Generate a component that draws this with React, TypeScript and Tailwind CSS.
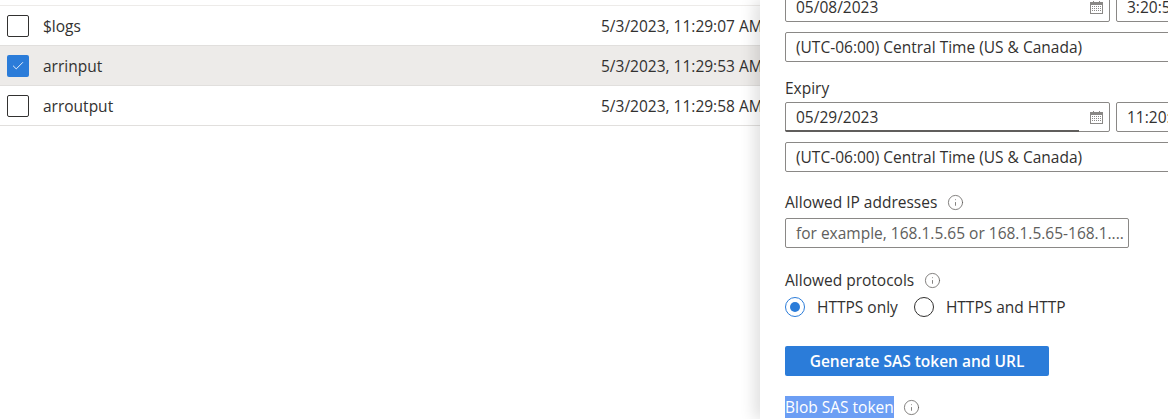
import { Check, Info } from 'lucide-react'

const containers = [
  { name: '$logs', modified: '5/3/2023, 11:29:07 AM', checked: false },
  { name: 'arrinput', modified: '5/3/2023, 11:29:53 AM', checked: true },
  { name: 'arroutput', modified: '5/3/2023, 11:29:58 AM', checked: false },
]

function CalendarIcon() {
  return (
    <svg width="15" height="15" viewBox="0 0 15 15" className="text-[#8a8886]">
      <rect x="1.5" y="2.5" width="12" height="11" fill="none" stroke="currentColor" />
      <rect x="1.5" y="2.5" width="12" height="2.5" fill="currentColor" />
      <line x1="4.5" y1="1" x2="4.5" y2="3.5" stroke="currentColor" />
      <line x1="10.5" y1="1" x2="10.5" y2="3.5" stroke="currentColor" />
      {[6.5, 8.5, 10.5].map((y) =>
        [3.5, 5.5, 7.5, 9.5, 11.5].map((x) => (
          <rect key={`${x}-${y}`} x={x - 0.5} y={y - 0.5} width="1" height="1" fill="currentColor" />
        )),
      )}
    </svg>
  )
}

function Label({ text, info, className = '' }: { text: string; info?: boolean; className?: string }) {
  return (
    <div className={`flex items-center gap-[10px] h-[20px] ${className}`}>
      <span>{text}</span>
      {info && <Info className="size-[17px] text-[#605e5c]" strokeWidth={1.1} />}
    </div>
  )
}

function DateRow({ date, time, className = '', underline }: { date: string; time: string; className?: string; underline?: boolean }) {
  return (
    <div className={`flex gap-[6px] whitespace-nowrap ${className}`}>
      <div className="relative w-[325px] h-[30px] shrink-0 flex items-center justify-between border border-[#8a8886] rounded-[2px] pl-[10px] pr-[5px]">
        <span>{date}</span>
        <CalendarIcon />
        {underline && <span className="absolute left-[-1px] bottom-[-1px] w-[294px] h-[2px] bg-[#605e5c] rounded-bl-[2px]" />}
      </div>
      <div className="flex-1 h-[30px] flex items-center border border-[#8a8886] rounded-[2px] px-[10px] overflow-hidden">
        <span>{time}</span>
      </div>
    </div>
  )
}

function Select({ value, className = '' }: { value: string; className?: string }) {
  return (
    <div className={`h-[30px] flex items-center border border-[#8a8886] rounded-[2px] px-[10px] whitespace-nowrap ${className}`}>
      {value}
    </div>
  )
}

function Radio({ label, selected }: { label: string; selected?: boolean }) {
  return (
    <div className="flex items-center gap-[12px]">
      <span
        className={`size-[20px] rounded-full border flex items-center justify-center bg-white ${
          selected ? 'border-[#2b7cd9]' : 'border-[#323130]'
        }`}
      >
        {selected && <span className="size-[10px] rounded-full bg-[#2b7cd9]" />}
      </span>
      <span>{label}</span>
    </div>
  )
}

export default function App() {
  return (
    <div className="w-[1168px] h-[419px] overflow-hidden flex bg-white text-[#323130] text-[15.5px] leading-[20px] font-['Open_Sans',sans-serif]">
      <section className="flex-1 min-w-0 overflow-hidden">
        <div className="w-[800px]">
          <div className="h-[6px] border-b border-[#edebe9]" />
          {containers.map((c) => (
            <div
              key={c.name}
              className={`h-[40px] flex items-center border-b border-[#e1dfdd] ${c.checked ? 'bg-[#edebe9]' : ''}`}
            >
              <div className="pl-[7px] w-[43px] shrink-0">
                {c.checked ? (
                  <span className="size-[22px] rounded-[2px] bg-[#2b7cd9] flex items-center justify-center">
                    <Check className="size-[14px] text-white" strokeWidth={1.5} />
                  </span>
                ) : (
                  <span className="block size-[22px] rounded-[2px] border border-[#323130] bg-white" />
                )}
              </div>
              <div className="w-[558px] shrink-0">{c.name}</div>
              <div className="whitespace-nowrap">{c.modified}</div>
            </div>
          ))}
        </div>
      </section>

      <aside className="relative z-10 w-[408px] shrink-0 overflow-hidden bg-white shadow-[-6px_0_14px_rgba(0,0,0,0.12)]">
        <div className="w-[460px] pl-[25px] -mt-[8px] flex flex-col">
          <DateRow date="05/08/2023" time="3:20:58 PM" />
          <Select className="mt-[10px]" value="(UTC-06:00) Central Time (US & Canada)" />

          <Label className="mt-[16px]" text="Expiry" />
          <DateRow className="mt-[4px]" date="05/29/2023" time="11:20:58 PM" underline />
          <Select className="mt-[10px]" value="(UTC-06:00) Central Time (US & Canada)" />

          <Label className="mt-[20px]" text="Allowed IP addresses" info />
          <div className="mt-[6px] w-[344px] h-[30px] flex items-center border border-[#8a8886] rounded-[2px] px-[10px] text-[#605e5c] whitespace-nowrap overflow-hidden">
            for example, 168.1.5.65 or 168.1.5.65-168.1....
          </div>

          <Label className="mt-[22px]" text="Allowed protocols" info />
          <div className="mt-[7px] flex items-center gap-[16px]">
            <Radio label="HTTPS only" selected />
            <Radio label="HTTPS and HTTP" />
          </div>

          <button className="mt-[29px] w-[264px] h-[30px] rounded-[2px] bg-[#2b7cd9] text-white font-semibold">
            Generate SAS token and URL
          </button>

          <div className="mt-[20px] flex items-center gap-[9px]">
            <span className="bg-[#6c9ef4] text-white leading-[22px]">Blob SAS token</span>
            <Info className="size-[17px] text-[#605e5c]" strokeWidth={1.1} />
          </div>
        </div>
      </aside>
    </div>
  )
}
